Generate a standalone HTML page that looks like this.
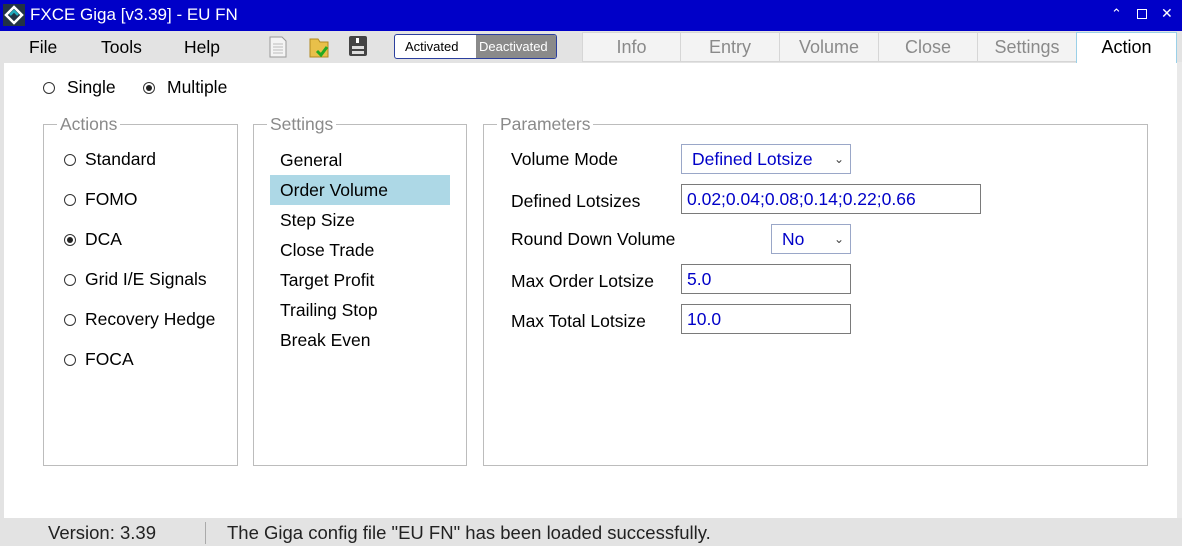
<!DOCTYPE html>
<html><head><style>
*{margin:0;padding:0;box-sizing:border-box}
body{width:1182px;height:546px;position:relative;overflow:hidden;background:#fff;font-family:"Liberation Sans",sans-serif;font-size:17.5px;color:#000}
.a{position:absolute;white-space:nowrap}
.title{left:0;top:0;width:1182px;height:31px;background:#0000c8;color:#fff;font-size:17px}
.menu{left:0;top:31px;width:1182px;height:32px;background:#e3e3e3}
.tab{position:absolute;top:32px;height:30px;background:#f3f3f3;border:1px solid #d6d6d6;color:#8a8a8a;text-align:center;line-height:29px;font-size:18px}
.grp{position:absolute;border:1px solid #bcbcbc}
.lg{position:absolute;top:-10px;background:#fff;color:#8a8a8a;padding:0 3px;line-height:18px}
.rad{position:absolute;width:12px;height:12px;border:1px solid #333;border-radius:50%}
.rad.on::after{content:"";position:absolute;left:2px;top:2px;width:6px;height:6px;border-radius:50%;background:#222}
.box{position:absolute;border:1px solid #7a7a7a;color:#0000c8;padding-left:5px;line-height:28px;height:30px}
.chev{position:absolute;right:6px;top:0;color:#444;font-size:12px}
</style></head><body>
<div class="a title">
 <svg style="position:absolute;left:3px;top:4px" width="22" height="22" viewBox="0 0 22 22"><rect width="22" height="22" fill="#234"/><path d="M3 11 L11 3 L19 11 L11 19 Z" fill="none" stroke="#fff" stroke-width="2.5"/><path d="M7 11 L11 7 L15 11" fill="none" stroke="#2ab" stroke-width="2.5"/></svg>
 <span class="a" style="left:30px;top:5px">FXCE Giga [v3.39] - EU FN</span>
 <span class="a" style="left:1111px;top:6px;font-size:13px">&#8963;</span>
 <span class="a" style="left:1137px;top:9px;width:10px;height:10px;border:1.5px solid #fff"></span>
 <span class="a" style="left:1161px;top:5px;font-size:14px">✕</span>
</div>
<div class="a menu">
 <span class="a" style="left:29px;top:6px">File</span>
 <span class="a" style="left:101px;top:6px">Tools</span>
 <span class="a" style="left:184px;top:6px">Help</span>
 <svg class="a" style="left:268px;top:5px" width="20" height="22"><path d="M2 1h12l4 4v16H2z" fill="#f4f4f4" stroke="#999"/><path d="M5 8h10M5 11h10M5 14h10M5 17h10" stroke="#bbb"/></svg>
 <svg class="a" style="left:308px;top:4px" width="22" height="24"><path d="M2 4h8l2 3h8v15H2z" fill="#e8c04a" stroke="#b08a20"/><path d="M9 16l4 4 6-8" stroke="#2a2" stroke-width="3" fill="none"/></svg>
 <svg class="a" style="left:348px;top:4px" width="20" height="22"><rect x="1" y="1" width="18" height="20" rx="2" fill="#444"/><rect x="8" y="3" width="3" height="5" fill="#fff"/><rect x="4" y="11" width="12" height="3" fill="#ddd"/><rect x="4" y="16" width="12" height="3" fill="#ddd"/></svg>
 <div class="a" style="left:394px;top:3px;width:163px;height:25px;border:1px solid #2b3f9e;border-radius:3px;background:#fff;overflow:hidden;font-size:13px">
  <span class="a" style="left:10px;top:4px">Activated</span>
  <span class="a" style="left:81px;top:0;width:81px;height:23px;background:#8a8a8a;color:#fff;padding:4px 0 0 3px">Deactivated</span>
 </div>
</div>
<div class="tab" style="left:582px;width:99px">Info</div>
<div class="tab" style="left:680px;width:100px">Entry</div>
<div class="tab" style="left:779px;width:100px">Volume</div>
<div class="tab" style="left:878px;width:100px">Close</div>
<div class="tab" style="left:977px;width:100px">Settings</div>
<div class="tab" style="left:1076px;width:101px;background:#fff;color:#000;border-color:#9ad0e8;border-bottom:none;height:31px">Action</div>
<div class="a" style="left:0;top:62px;width:4px;height:456px;background:#e3e3e3"></div>
<div class="a" style="left:1177px;top:62px;width:5px;height:456px;background:#e9e9e9"></div>

<span class="rad" style="left:43px;top:82px"></span><span class="a" style="left:67px;top:77px">Single</span>
<span class="rad on" style="left:143px;top:82px"></span><span class="a" style="left:167px;top:77px">Multiple</span>

<div class="grp" style="left:43px;top:124px;width:195px;height:342px">
 <span class="lg" style="left:13px">Actions</span>
 <span class="rad" style="left:20px;top:29px"></span><span class="a" style="left:41px;top:24px">Standard</span>
 <span class="rad" style="left:20px;top:69px"></span><span class="a" style="left:41px;top:64px">FOMO</span>
 <span class="rad on" style="left:20px;top:109px"></span><span class="a" style="left:41px;top:104px">DCA</span>
 <span class="rad" style="left:20px;top:149px"></span><span class="a" style="left:41px;top:144px">Grid I/E Signals</span>
 <span class="rad" style="left:20px;top:189px"></span><span class="a" style="left:41px;top:184px">Recovery Hedge</span>
 <span class="rad" style="left:20px;top:229px"></span><span class="a" style="left:41px;top:224px">FOCA</span>
</div>
<div class="grp" style="left:253px;top:124px;width:214px;height:342px">
 <span class="lg" style="left:13px">Settings</span>
 <span class="a" style="left:16px;top:50px;width:180px;height:30px;background:#add8e6"></span>
 <span class="a" style="left:26px;top:25px">General</span>
 <span class="a" style="left:26px;top:55px">Order Volume</span>
 <span class="a" style="left:26px;top:85px">Step Size</span>
 <span class="a" style="left:26px;top:115px">Close Trade</span>
 <span class="a" style="left:26px;top:145px">Target Profit</span>
 <span class="a" style="left:26px;top:175px">Trailing Stop</span>
 <span class="a" style="left:26px;top:205px">Break Even</span>
</div>
<div class="grp" style="left:483px;top:124px;width:665px;height:342px">
 <span class="lg" style="left:13px">Parameters</span>
 <span class="a" style="left:27px;top:24px">Volume Mode</span>
 <span class="a" style="left:27px;top:66px">Defined Lotsizes</span>
 <span class="a" style="left:27px;top:104px">Round Down Volume</span>
 <span class="a" style="left:27px;top:146px">Max Order Lotsize</span>
 <span class="a" style="left:27px;top:186px">Max Total Lotsize</span>
</div>
<div class="box" style="left:681px;top:144px;width:170px;border-color:#9aa7c8;padding-left:10px">Defined Lotsize<span class="chev">&#8964;</span></div>
<div class="box" style="left:681px;top:184px;width:300px">0.02;0.04;0.08;0.14;0.22;0.66</div>
<div class="box" style="left:771px;top:224px;width:80px;border-color:#9aa7c8;padding-left:10px">No<span class="chev">&#8964;</span></div>
<div class="box" style="left:681px;top:264px;width:170px">5.0</div>
<div class="box" style="left:681px;top:304px;width:170px">10.0</div>

<div class="a" style="left:0;top:518px;width:1182px;height:28px;background:#e3e3e3;font-size:18.5px">
 <span class="a" style="left:48px;top:4px;color:#222">Version: 3.39</span>
 <span class="a" style="left:205px;top:4px;width:1px;height:22px;background:#aaa"></span>
 <span class="a" style="left:227px;top:4px;color:#222">The Giga config file "EU FN" has been loaded successfully.</span>
</div>
</body></html>
